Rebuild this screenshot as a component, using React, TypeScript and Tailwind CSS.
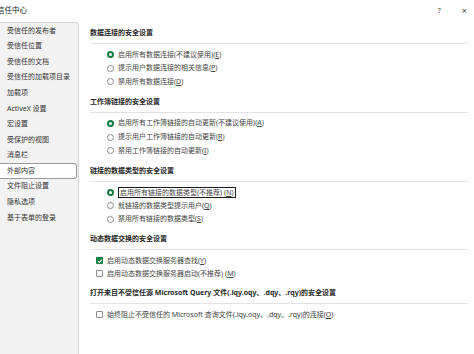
const font = { fontFamily: '"Noto Sans", "Noto Sans CJK SC", sans-serif' };

const navItems = [
  "受信任的发布者",
  "受信任位置",
  "受信任的文档",
  "受信任的加载项目录",
  "加载项",
  "ActiveX 设置",
  "宏设置",
  "受保护的视图",
  "消息栏",
  "外部内容",
  "文件阻止设置",
  "隐私选项",
  "基于表单的登录",
];

type Opt = { text: string; key: string; tail?: string; on?: boolean; focus?: boolean };

function Label({ o }: { o: Opt }) {
  return (
    <span className={o.focus ? "border border-[#1a1a1a] px-[1px] leading-[9px]" : ""}>
      {o.text}(<u>{o.key}</u>){o.tail}
    </span>
  );
}

function Radio({ o }: { o: Opt }) {
  return (
    <div className="flex h-[13.6px] items-center gap-[4px] pl-[17px]">
      {o.on ? (
        <span className="box-border h-[7px] w-[7px] shrink-0 rounded-full border-[2px] border-[#107c41] bg-white" />
      ) : (
        <span className="box-border h-[7px] w-[7px] shrink-0 rounded-full border border-[#8c8c8c] bg-white" />
      )}
      <Label o={o} />
    </div>
  );
}

function Check({ o }: { o: Opt }) {
  return (
    <div className="flex h-[13px] items-center gap-[4px] pl-[6px]">
      {o.on ? (
        <span className="flex h-[7px] w-[7px] shrink-0 items-center justify-center rounded-[1px] bg-[#107c41]">
          <svg width="6" height="6" viewBox="0 0 6 6">
            <path d="M1 3.1 L2.4 4.4 L5 1.6" fill="none" stroke="white" strokeWidth="1.1" />
          </svg>
        </span>
      ) : (
        <span className="box-border h-[7px] w-[7px] shrink-0 rounded-[1px] border border-[#8c8c8c] bg-white" />
      )}
      <Label o={o} />
    </div>
  );
}

function Section({ title, children }: { title: string; children: React.ReactNode }) {
  return (
    <div className="mb-[6px]">
      <div className="h-[13px] whitespace-nowrap text-[7px] font-bold leading-[13px] text-[#1f1f1f]">{title}</div>
      <div className="mt-[4px] mr-[6px] h-px bg-[#e3e3e3]" />
      <div className="pt-[4px] text-[7px] text-[#444]">{children}</div>
    </div>
  );
}

export default function App() {
  return (
    <div className="relative h-[354px] w-[474px] overflow-hidden bg-white" style={font}>
      {/* title bar */}
      <div className="flex h-[22px] items-center text-[7.5px] text-[#222]">
        <span className="ml-[-3px]">信任中心</span>
        <span className="ml-auto mr-[21px] text-[#444]">?</span>
        <span className="mr-[7px] text-[9px] text-[#444]">×</span>
      </div>

      <div className="flex h-[332px]">
        {/* nav */}
        <div className="w-[79px] shrink-0 rounded-tr-[4px] border-r border-t border-[#d4d4d4] bg-[#f3f3f3] text-[7px] text-[#333]">
          {navItems.map((n) =>
            n === "外部内容" ? (
              <div
                key={n}
                className="box-border flex h-[15.6px] w-[77px] items-center rounded-r-[3px] border border-l-0 border-[#9a9a9a] bg-white pl-[7px]"
              >
                {n}
              </div>
            ) : (
              <div key={n} className="flex h-[15.6px] items-center pl-[7px]">
                {n}
              </div>
            )
          )}
        </div>

        {/* content */}
        <div className="min-w-0 flex-1 whitespace-nowrap pl-[11px] pt-[4px]">
          <Section title="数据连接的安全设置">
            <Radio o={{ text: "启用所有数据连接(不建议使用)", key: "E", on: true }} />
            <Radio o={{ text: "提示用户数据连接的相关信息", key: "P" }} />
            <Radio o={{ text: "禁用所有数据连接", key: "D" }} />
          </Section>
          <Section title="工作簿链接的安全设置">
            <Radio o={{ text: "启用所有工作簿链接的自动更新(不建议使用)", key: "A", on: true }} />
            <Radio o={{ text: "提示用户工作簿链接的自动更新", key: "R" }} />
            <Radio o={{ text: "禁用工作簿链接的自动更新", key: "I" }} />
          </Section>
          <Section title="链接的数据类型的安全设置">
            <Radio o={{ text: "启用所有链接的数据类型(不推荐) ", key: "N", on: true, focus: true }} />
            <Radio o={{ text: "就链接的数据类型提示用户", key: "Q" }} />
            <Radio o={{ text: "禁用所有链接的数据类型", key: "S" }} />
          </Section>
          <Section title="动态数据交换的安全设置">
            <Check o={{ text: "启用动态数据交换服务器查找", key: "Y", on: true }} />
            <Check o={{ text: "启用动态数据交换服务器启动(不推荐) ", key: "M" }} />
          </Section>
          <Section title="打开来自不受信任源 Microsoft Query 文件(.iqy.oqy、.dqy、.rqy)的安全设置">
            <Check o={{ text: "始终阻止不受信任的 Microsoft 查询文件(.iqy.oqy、.dqy、.rqy)的连接", key: "O" }} />
          </Section>
        </div>
      </div>
    </div>
  );
}
